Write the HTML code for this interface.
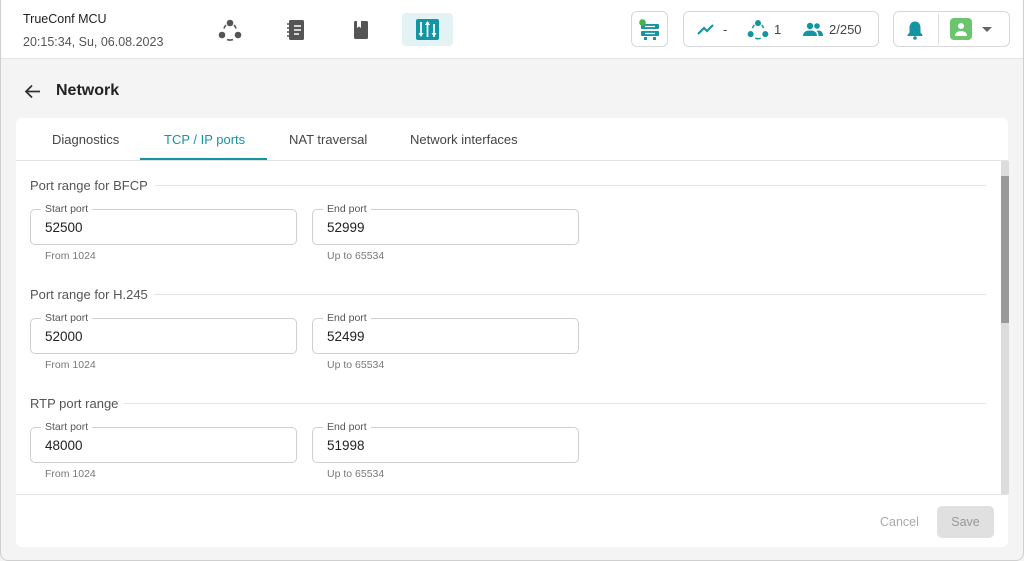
<!DOCTYPE html>
<html><head><meta charset="utf-8"><style>
*{box-sizing:border-box;margin:0;padding:0}
body{width:1024px;height:561px;overflow:hidden;font-family:"Liberation Sans",Roboto,sans-serif;background:#fff;position:relative}
.frame{position:absolute;left:0;top:0;width:1024px;height:561px;background:#f4f4f4;overflow:hidden}
.border{position:absolute;left:0;top:0;width:1024px;height:561px;border:1px solid #cfcfcf;border-top:none;border-radius:0 0 8px 8px;pointer-events:none}
.hdr{position:absolute;left:0;top:0;width:1024px;height:59px;background:#fff;border-bottom:1px solid #e6e6e6}
.t1{position:absolute;left:23px;top:12px;font-size:12.5px;color:#222}
.t2{position:absolute;left:23px;top:35px;font-size:12.5px;color:#555}
.ic{position:absolute}
.box{position:absolute;border:1px solid #d8d8d8;border-radius:6px;background:#fff}
.card{position:absolute;left:16px;top:118px;width:992px;height:429px;background:#fff;border-radius:6px}
.tabs{position:absolute;left:0;top:0;width:992px;height:43px;border-bottom:1px solid #e3e3e3}
.tab{position:absolute;top:14px;font-size:13px;color:#444}
.sec{position:absolute;left:14px;font-size:13px;color:#555}
.line{position:absolute;height:1px;background:#e4e4e4;right:22px}
.fld{position:absolute;width:267px;height:36px;border:1px solid #cfcfcf;border-radius:5px}
.fld .l{position:absolute;left:10px;top:-7px;background:#fff;padding:0 4px;font-size:10.5px;color:#555}
.fld .v{position:absolute;left:14px;top:10px;font-size:13.5px;color:#222}
.hint{position:absolute;font-size:10.5px;color:#777}
</style></head><body>
<div class="frame">
<div class="hdr">
<div class="t1">TrueConf MCU</div>
<div class="t2">20:15:34, Su, 06.08.2023</div>
<svg class="ic" style="left:218px;top:19px" width="24" height="22" viewBox="0 0 24 22"><g fill="#555"><circle cx="12" cy="4" r="3.3"/><circle cx="4" cy="16" r="3.3"/><circle cx="20" cy="16" r="3.3"/></g><path d="M6 9.5A8 8 0 0 1 8 6M16 6a8 8 0 0 1 2 3.5M9 20.5a8 8 0 0 0 6 0" stroke="#555" stroke-width="1.6" fill="none"/></svg>
<svg class="ic" style="left:286px;top:19px" width="20" height="22" viewBox="0 0 20 22"><rect x="3" y="1" width="15" height="20" rx="1.5" fill="#555"/><g stroke="#fff" stroke-width="1.4"><path d="M8 7h7M8 11h7M8 15h5"/></g><g stroke="#555" stroke-width="1.5"><path d="M1 5h4M1 9h4M1 13h4M1 17h4"/></g></svg>
<svg class="ic" style="left:353px;top:20px" width="16" height="20" viewBox="0 0 16 20"><rect x="1" y="1" width="14" height="18" rx="1.5" fill="#555"/><path d="M4 1v7l2-1.5L8 8V1z" fill="#fff"/></svg>
<div style="position:absolute;left:402px;top:13px;width:51px;height:33px;background:#e3f3f5;border-radius:4px"></div>
<svg class="ic" style="left:416px;top:19px" width="23" height="21" viewBox="0 0 23 21"><rect width="23" height="21" rx="2" fill="#1595a3"/><g stroke="#fff" stroke-width="1.7"><path d="M5 3v13M11.5 3v15M18 5v13"/></g><g fill="#fff"><path d="M2.5 14h5L5 18zM9 6h5l-2.5-4zM15.5 14h5L18 18z"/></g></svg>
<div class="box" style="left:631px;top:11px;width:37px;height:36px"></div>
<svg class="ic" style="left:638px;top:18px" width="24" height="24" viewBox="0 0 24 24"><g fill="#1595a3"><rect x="3" y="6" width="18" height="5" rx="1"/><rect x="3" y="13" width="18" height="5" rx="1"/><rect x="6" y="19" width="3" height="3"/><rect x="15" y="19" width="3" height="3"/></g><g stroke="#fff" stroke-width="1.3"><path d="M7 8.5h10M7 15.5h10"/></g><circle cx="4.5" cy="4.5" r="3.3" fill="#4caf50"/></svg>
<div class="box" style="left:683px;top:11px;width:196px;height:36px"></div>
<svg class="ic" style="left:697px;top:22px" width="20" height="14" viewBox="0 0 20 14"><path d="M1 12l6-6 3 3 6-6" stroke="#1595a3" stroke-width="2.2" fill="none"/></svg>
<div style="position:absolute;left:723px;top:22px;font-size:13px;color:#444">-</div>
<svg class="ic" style="left:747px;top:19px" width="22" height="21" viewBox="0 0 24 22"><g fill="#1595a3"><circle cx="12" cy="4" r="3.3"/><circle cx="4" cy="16" r="3.3"/><circle cx="20" cy="16" r="3.3"/></g><path d="M6 9.5A8 8 0 0 1 8 6M16 6a8 8 0 0 1 2 3.5M9 20.5a8 8 0 0 0 6 0" stroke="#1595a3" stroke-width="1.6" fill="none"/></svg>
<div style="position:absolute;left:774px;top:22px;font-size:13px;color:#444">1</div>
<svg class="ic" style="left:803px;top:22px" width="20" height="14" viewBox="0 0 20 14"><g fill="#1595a3"><circle cx="7" cy="4" r="3.2"/><circle cx="14" cy="4" r="2.8"/><path d="M0 14c0-4 3-5.5 7-5.5s7 1.5 7 5.5z"/><path d="M15 8.5c3 0 5 1.5 5 5.5h-4.5c0-2-0.5-4-2-5z"/></g></svg>
<div style="position:absolute;left:829px;top:22px;font-size:13px;color:#444">2/250</div>
<div class="box" style="left:893px;top:11px;width:117px;height:36px"></div>
<div style="position:absolute;left:938px;top:14px;width:1px;height:31px;background:#ddd"></div>
<svg class="ic" style="left:906px;top:20px" width="18" height="20" viewBox="0 0 18 20"><path d="M9 1.5c-3.5 0-5.5 2.8-5.5 6v5L1.5 15v1h15v-1l-2-2.5v-5c0-3.2-2-6-5.5-6z" fill="#1595a3"/><circle cx="9" cy="18" r="1.8" fill="#1595a3"/></svg>
<div style="position:absolute;left:950px;top:18px;width:22px;height:22px;background:#6cc46f;border-radius:4px"></div>
<svg class="ic" style="left:954px;top:22px" width="14" height="15" viewBox="0 0 14 15"><circle cx="7" cy="4" r="3" fill="#fff"/><path d="M1 14c0-3.5 3-5 6-5s6 1.5 6 5z" fill="#fff"/></svg>
<svg class="ic" style="left:982px;top:27px" width="10" height="6" viewBox="0 0 10 6"><path d="M0 0h10L5 5z" fill="#666"/></svg>
</div>
<svg class="ic" style="left:24px;top:84px" width="17" height="15" viewBox="0 0 17 15"><path d="M16 7.5H2M8 1.5l-6 6 6 6" stroke="#333" stroke-width="1.8" fill="none"/></svg>
<div style="position:absolute;left:56px;top:82px;font-size:16px;font-weight:bold;color:#222">Network</div>
<div class="card">
<div class="tabs">
<div class="tab" style="left:36px">Diagnostics</div>
<div class="tab" style="left:148px;color:#1595a3">TCP / IP ports</div>
<div style="position:absolute;left:124px;top:40px;width:127px;height:2px;background:#1595a3"></div>
<div class="tab" style="left:273px">NAT traversal</div>
<div class="tab" style="left:394px">Network interfaces</div>
</div>
<div class="sec" style="top:60px">Port range for BFCP</div><div class="line" style="left:139px;top:67px"></div>
<div class="fld" style="left:14px;top:91px"><span class="l">Start port</span><span class="v">52500</span></div>
<div class="fld" style="left:296px;top:91px"><span class="l">End port</span><span class="v">52999</span></div>
<div class="hint" style="left:29px;top:132px">From 1024</div><div class="hint" style="left:311px;top:132px">Up to 65534</div>
<div class="sec" style="top:169px">Port range for H.245</div><div class="line" style="left:138px;top:176px"></div>
<div class="fld" style="left:14px;top:200px"><span class="l">Start port</span><span class="v">52000</span></div>
<div class="fld" style="left:296px;top:200px"><span class="l">End port</span><span class="v">52499</span></div>
<div class="hint" style="left:29px;top:241px">From 1024</div><div class="hint" style="left:311px;top:241px">Up to 65534</div>
<div class="sec" style="top:278px">RTP port range</div><div class="line" style="left:108px;top:285px"></div>
<div class="fld" style="left:14px;top:309px"><span class="l">Start port</span><span class="v">48000</span></div>
<div class="fld" style="left:296px;top:309px"><span class="l">End port</span><span class="v">51998</span></div>
<div class="hint" style="left:29px;top:350px">From 1024</div><div class="hint" style="left:311px;top:350px">Up to 65534</div>
<div style="position:absolute;left:985px;top:43px;width:8px;height:333px;background:#dcdcdc"></div>
<div style="position:absolute;left:985px;top:58px;width:8px;height:147px;background:#9a9a9a"></div>
<div style="position:absolute;left:0;top:376px;width:992px;height:1px;background:#e4e4e4"></div>
<div style="position:absolute;left:864px;top:397px;font-size:12.5px;color:#aaa">Cancel</div>
<div style="position:absolute;left:921px;top:388px;width:57px;height:32px;background:#e0e0e0;border-radius:5px;font-size:12.5px;color:#999;text-align:center;line-height:32px">Save</div>
</div>
</div>
<div class="border"></div>
</body></html>
